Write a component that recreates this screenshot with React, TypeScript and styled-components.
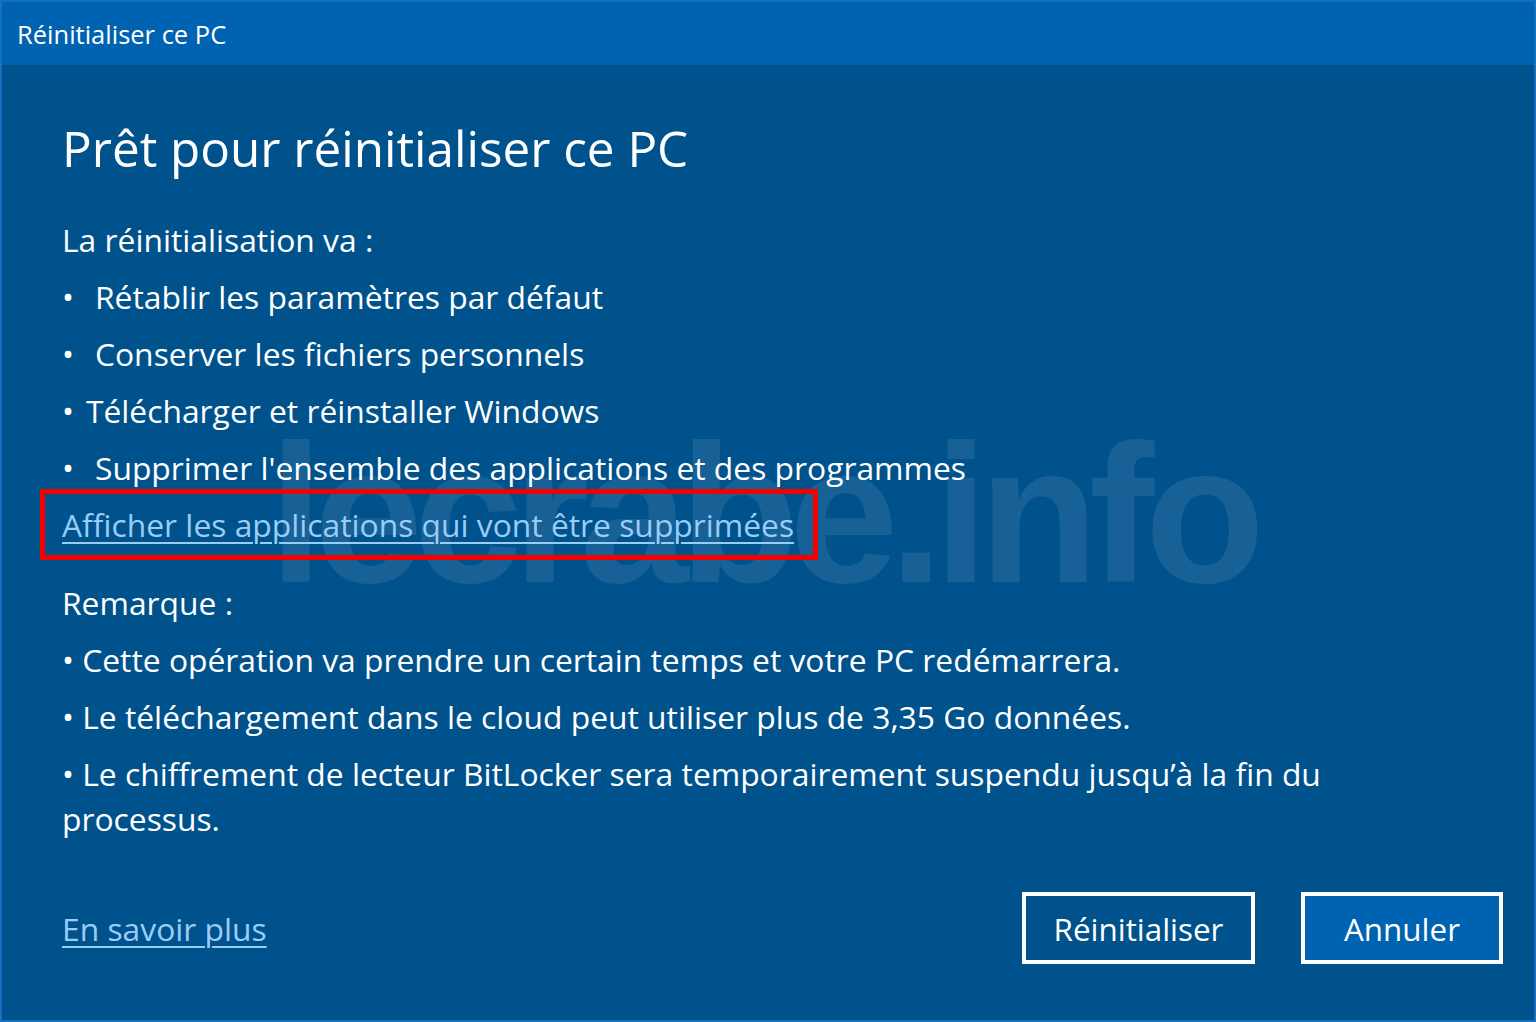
import React from "react";
import styled, { createGlobalStyle } from "styled-components";

const Global = createGlobalStyle`
  html, body { margin: 0; padding: 0; background: #00528c; }
  * { box-sizing: border-box; }
`;

const FONT = `"Open Sans", "Noto Sans", sans-serif`;

const Window = styled.div`
  width: 1536px;
  height: 1022px;
  display: flex;
  flex-direction: column;
  border: 2px solid #1770bb;
  background: #00528c;
  font-family: ${FONT};
  color: #ffffff;
  overflow: hidden;
`;

const TitleBar = styled.div`
  height: 63px;
  flex: none;
  display: flex;
  align-items: center;
  padding-left: 15px;
  background: #0063b1;
  font-size: 25.5px;
  color: #ffffff;
`;

const Body = styled.div`
  position: relative;
  flex: 1;
  display: flex;
  flex-direction: column;
  padding: 0 31px 56px 60px;
`;

const Watermark = styled.div`
  position: absolute;
  left: 267px;
  top: 350px;
  font-family: "Liberation Sans", Arial, sans-serif;
  font-weight: 700;
  font-size: 196px;
  letter-spacing: -9.5px;
  line-height: 200px;
  color: rgba(255, 255, 255, 0.09);
  pointer-events: none;
  white-space: nowrap;
`;

const Heading = styled.h1`
  position: relative;
  margin: 51px 0 37px;
  font-size: 49.4px;
  line-height: 64px;
  font-weight: 400;
`;

const Block = styled.div<{ $gapTop?: number }>`
  position: relative;
  display: flex;
  flex-direction: column;
  gap: 12px;
  margin-top: ${(p) => p.$gapTop ?? 0}px;
`;

const Line = styled.p`
  margin: 0;
  font-size: 31.8px;
  line-height: 45px;
  white-space: pre;
`;

const Bullet = styled.span<{ $wide?: boolean }>`
  display: inline-block;
  margin-right: ${(p) => (p.$wide ? 21 : 12)}px;
`;

const LinkRow = styled.div`
  position: relative;
  height: 45px;
  display: flex;
  align-items: center;
`;

const Link = styled.a<{ $size?: number }>`
  font-size: ${(p) => p.$size ?? 31.8}px;
  line-height: 45px;
  color: #99cdf7;
  text-decoration: underline;
  text-underline-offset: 5px;
  text-decoration-thickness: 2px;
`;

const Highlight = styled.div`
  position: absolute;
  left: -22px;
  top: -13px;
  width: 778px;
  height: 71px;
  border: 5px solid #f40000;
  pointer-events: none;
`;

const Footer = styled.div`
  position: relative;
  margin-top: auto;
  display: flex;
  align-items: center;
  justify-content: space-between;
`;

const Buttons = styled.div`
  display: flex;
  gap: 46px;
`;

const Button = styled.button<{ $primary?: boolean; $w: number }>`
  width: ${(p) => p.$w}px;
  height: 72px;
  border: 4px solid #ffffff;
  background: ${(p) => (p.$primary ? "#0063b1" : "#00528c")};
  color: #ffffff;
  font-family: ${FONT};
  font-size: 31.4px;
  padding: 0;
  cursor: pointer;
`;

const items: { text: string; wide: boolean }[] = [
  { text: "Rétablir les paramètres par défaut", wide: true },
  { text: "Conserver les fichiers personnels", wide: true },
  { text: "Télécharger et réinstaller Windows", wide: false },
  { text: "Supprimer l'ensemble des applications et des programmes", wide: true },
];

export default function App() {
  return (
    <>
      <Global />
      <Window>
        <TitleBar>Réinitialiser ce PC</TitleBar>
        <Body>
          <Watermark>lecrabe.info</Watermark>
          <Heading>Prêt pour réinitialiser ce PC</Heading>
          <Block>
            <Line>La réinitialisation va :</Line>
            {items.map((it) => (
              <Line key={it.text}>
                <Bullet $wide={it.wide}>•</Bullet>
                {it.text}
              </Line>
            ))}
            <LinkRow>
              <Highlight />
              <Link href="#">Afficher les applications qui vont être supprimées</Link>
            </LinkRow>
          </Block>
          <Block $gapTop={33}>
            <Line>Remarque :</Line>
            <Line>• Cette opération va prendre un certain temps et votre PC redémarrera.</Line>
            <Line>• Le téléchargement dans le cloud peut utiliser plus de 3,35 Go données.</Line>
            <Line>
              {"• Le chiffrement de lecteur BitLocker sera temporairement suspendu jusqu’à la fin du\nprocessus."}
            </Line>
          </Block>
          <Footer>
            <Link href="#" $size={31.8}>En savoir plus</Link>
            <Buttons>
              <Button $w={233}>Réinitialiser</Button>
              <Button $w={202} $primary>Annuler</Button>
            </Buttons>
          </Footer>
        </Body>
      </Window>
    </>
  );
}
